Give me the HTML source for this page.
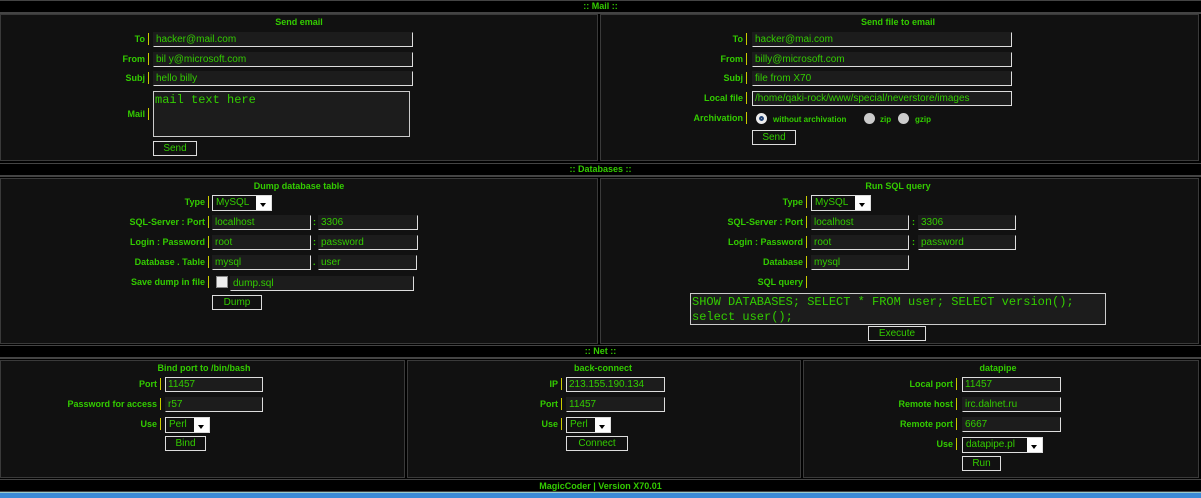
<!DOCTYPE html>
<html><head><meta charset="utf-8"><style>
*{margin:0;padding:0;box-sizing:border-box}
body{width:1201px;height:498px;background:#000;position:relative;overflow:hidden;font-family:"Liberation Sans",sans-serif;color:#3c0}
.a{position:absolute}
.bar{position:absolute;left:0;width:1201px;height:14px;background:#000;border-top:1px solid #444;border-bottom:2px solid #444;font:bold 9px "Liberation Sans",sans-serif;color:#3c0;text-align:center;line-height:11px}
.p{position:absolute;background:#111;border:1px solid #3a3a3a}
.t{position:absolute;font:bold 9px "Liberation Sans",sans-serif;color:#3c0;text-align:center;white-space:nowrap}
.l{position:absolute;font:bold 9px "Liberation Sans",sans-serif;color:#3c0;text-align:right;white-space:nowrap;line-height:15px}
.y{position:absolute;width:1px;height:12px;background:#cc0}
.i{position:absolute;height:15px;background:#1c1c1c;border:1px solid #1c1c1c;border-bottom-color:#ddd;border-right-color:#ddd;font:10px "Liberation Sans",sans-serif;color:#3c0;line-height:13px;padding-left:2px;white-space:nowrap;overflow:hidden}
.b{position:absolute;height:15px;background:#111;border:1px solid #ddd;font:10px "Liberation Sans",sans-serif;color:#3c0;text-align:center;line-height:13px}
.s{position:absolute;height:16px;background:#111;border:1px solid #ddd;font:10px "Liberation Sans",sans-serif;color:#3c0;line-height:14px;padding-left:3px}
.s:after{content:"";position:absolute;right:0;top:0;width:15px;height:14px;background:#fff}
.s:before{content:"";position:absolute;right:5px;top:7px;border:3px solid transparent;border-top:4px solid #000;z-index:2}
.m{position:absolute;background:#1c1c1c;border:1px solid #ccc;font:12px "Liberation Mono",monospace;color:#3c0;padding:1px 1px;line-height:15px;white-space:nowrap;overflow:hidden}
</style></head><body>
<div class="bar" style="top:0px">:: Mail ::</div>
<div class="bar" style="top:163px">:: Databases ::</div>
<div class="bar" style="top:345px">:: Net ::</div>
<div class="bar" style="top:479px;height:14px;line-height:12px">MagicCoder | Version X70.01</div>
<div class="a" style="top:492px;left:0;width:1201px;height:6px;background:#3a8ad6;border-top:1px solid #9cc"></div>

<div class="p" style="left:0;top:14px;width:598px;height:147px"></div>
<div class="p" style="left:600px;top:14px;width:599px;height:147px"></div>
<div class="p" style="left:0;top:178px;width:598px;height:166px"></div>
<div class="p" style="left:600px;top:178px;width:599px;height:166px"></div>
<div class="p" style="left:0;top:360px;width:405px;height:118px"></div>
<div class="p" style="left:407px;top:360px;width:394px;height:118px"></div>
<div class="p" style="left:803px;top:360px;width:396px;height:118px"></div>

<!-- Send email -->
<div class="t" style="left:199px;width:200px;top:17px">Send email</div>
<div class="l" style="right:1056px;top:32px">To</div><div class="y" style="left:148px;top:33px"></div><div class="i" style="left:153px;top:32px;width:260px">hacker@mail.com</div>
<div class="l" style="right:1056px;top:52px">From</div><div class="y" style="left:148px;top:53px"></div><div class="i" style="left:153px;top:52px;width:260px">bil y@microsoft.com</div>
<div class="l" style="right:1056px;top:71px">Subj</div><div class="y" style="left:148px;top:72px"></div><div class="i" style="left:153px;top:71px;width:260px">hello billy</div>
<div class="l" style="right:1056px;top:107px">Mail</div><div class="y" style="left:148px;top:108px"></div><div class="m" style="left:153px;top:91px;width:257px;height:46px">mail text here</div>
<div class="b" style="left:153px;top:141px;width:44px">Send</div>

<!-- Send file -->
<div class="t" style="left:798px;width:200px;top:17px">Send file to email</div>
<div class="l" style="right:458px;top:32px">To</div><div class="y" style="left:746px;top:33px"></div><div class="i" style="left:752px;top:32px;width:260px">hacker@mai.com</div>
<div class="l" style="right:458px;top:52px">From</div><div class="y" style="left:746px;top:53px"></div><div class="i" style="left:752px;top:52px;width:260px">billy@microsoft.com</div>
<div class="l" style="right:458px;top:71px">Subj</div><div class="y" style="left:746px;top:72px"></div><div class="i" style="left:752px;top:71px;width:260px">file from X70</div>
<div class="l" style="right:458px;top:91px">Local file</div><div class="y" style="left:746px;top:92px"></div><div class="i" style="left:752px;top:91px;width:260px;border-color:#ddd">/home/qaki-rock/www/special/neverstore/images</div>
<div class="l" style="right:458px;top:111px">Archivation</div><div class="y" style="left:746px;top:112px"></div>
<div class="a" style="left:756px;top:113px;width:11px;height:11px;border-radius:50%;background:#bbb;border:3px solid #eee;box-shadow:inset 0 0 0 2px #247"></div>
<div class="a" style="left:773px;top:115px;font:bold 8px 'Liberation Sans',sans-serif">without archivation</div>
<div class="a" style="left:864px;top:113px;width:11px;height:11px;border-radius:50%;background:#ccc"></div>
<div class="a" style="left:880px;top:115px;font:bold 8px 'Liberation Sans',sans-serif">zip</div>
<div class="a" style="left:898px;top:113px;width:11px;height:11px;border-radius:50%;background:#ccc"></div>
<div class="a" style="left:915px;top:115px;font:bold 8px 'Liberation Sans',sans-serif">gzip</div>
<div class="b" style="left:752px;top:130px;width:44px">Send</div>

<!-- Dump -->
<div class="t" style="left:199px;width:200px;top:181px">Dump database table</div>
<div class="l" style="right:996px;top:195px">Type</div><div class="y" style="left:208px;top:196px"></div><div class="s" style="left:212px;top:195px;width:60px">MySQL</div>
<div class="l" style="right:996px;top:215px">SQL-Server : Port</div><div class="y" style="left:208px;top:216px"></div><div class="i" style="left:212px;top:215px;width:99px">localhost</div><div class="l" style="left:313px;top:215px">:</div><div class="i" style="left:318px;top:215px;width:100px">3306</div>
<div class="l" style="right:996px;top:235px">Login : Password</div><div class="y" style="left:208px;top:236px"></div><div class="i" style="left:212px;top:235px;width:99px">root</div><div class="l" style="left:313px;top:235px">:</div><div class="i" style="left:318px;top:235px;width:100px">password</div>
<div class="l" style="right:996px;top:255px">Database . Table</div><div class="y" style="left:208px;top:256px"></div><div class="i" style="left:212px;top:255px;width:99px">mysql</div><div class="l" style="left:313px;top:255px">.</div><div class="i" style="left:318px;top:255px;width:99px">user</div>
<div class="l" style="right:996px;top:275px">Save dump in file</div><div class="y" style="left:208px;top:276px"></div><div class="a" style="left:216px;top:276px;width:12px;height:12px;background:#eee;border:1px solid #888"></div><div class="i" style="left:230px;top:276px;width:184px">dump.sql</div>
<div class="b" style="left:212px;top:295px;width:50px">Dump</div>

<!-- Run SQL -->
<div class="t" style="left:798px;width:200px;top:181px">Run SQL query</div>
<div class="l" style="right:398px;top:195px">Type</div><div class="y" style="left:806px;top:196px"></div><div class="s" style="left:811px;top:195px;width:60px">MySQL</div>
<div class="l" style="right:398px;top:215px">SQL-Server : Port</div><div class="y" style="left:806px;top:216px"></div><div class="i" style="left:811px;top:215px;width:98px">localhost</div><div class="l" style="left:912px;top:215px">:</div><div class="i" style="left:918px;top:215px;width:98px">3306</div>
<div class="l" style="right:398px;top:235px">Login : Password</div><div class="y" style="left:806px;top:236px"></div><div class="i" style="left:811px;top:235px;width:98px">root</div><div class="l" style="left:912px;top:235px">:</div><div class="i" style="left:918px;top:235px;width:98px">password</div>
<div class="l" style="right:398px;top:255px">Database</div><div class="y" style="left:806px;top:256px"></div><div class="i" style="left:811px;top:255px;width:98px">mysql</div>
<div class="l" style="right:398px;top:275px">SQL query</div><div class="y" style="left:806px;top:276px"></div>
<div class="m" style="left:690px;top:293px;width:416px;height:32px">SHOW DATABASES; SELECT * FROM user; SELECT version();<br>select user();</div>
<div class="b" style="left:868px;top:326px;width:58px">Execute</div>

<!-- Bind -->
<div class="t" style="left:104px;width:200px;top:363px">Bind port to /bin/bash</div>
<div class="l" style="right:1044px;top:377px">Port</div><div class="y" style="left:160px;top:378px"></div><div class="i" style="left:165px;top:377px;width:98px;border-color:#ddd">11457</div>
<div class="l" style="right:1044px;top:397px">Password for access</div><div class="y" style="left:160px;top:398px"></div><div class="i" style="left:165px;top:397px;width:98px">r57</div>
<div class="l" style="right:1044px;top:417px">Use</div><div class="y" style="left:160px;top:418px"></div><div class="s" style="left:165px;top:417px;width:45px">Perl</div>
<div class="b" style="left:165px;top:436px;width:41px">Bind</div>

<!-- back-connect -->
<div class="t" style="left:503px;width:200px;top:363px">back-connect</div>
<div class="l" style="right:643px;top:377px">IP</div><div class="y" style="left:561px;top:378px"></div><div class="i" style="left:566px;top:377px;width:99px;border-color:#ddd">213.155.190.134</div>
<div class="l" style="right:643px;top:397px">Port</div><div class="y" style="left:561px;top:398px"></div><div class="i" style="left:566px;top:397px;width:99px">11457</div>
<div class="l" style="right:643px;top:417px">Use</div><div class="y" style="left:561px;top:418px"></div><div class="s" style="left:566px;top:417px;width:45px">Perl</div>
<div class="b" style="left:566px;top:436px;width:62px">Connect</div>

<!-- datapipe -->
<div class="t" style="left:898px;width:200px;top:363px">datapipe</div>
<div class="l" style="right:248px;top:377px">Local port</div><div class="y" style="left:956px;top:378px"></div><div class="i" style="left:962px;top:377px;width:99px;border-color:#ddd">11457</div>
<div class="l" style="right:248px;top:397px">Remote host</div><div class="y" style="left:956px;top:398px"></div><div class="i" style="left:962px;top:397px;width:99px">irc.dalnet.ru</div>
<div class="l" style="right:248px;top:417px">Remote port</div><div class="y" style="left:956px;top:418px"></div><div class="i" style="left:962px;top:417px;width:99px">6667</div>
<div class="l" style="right:248px;top:437px">Use</div><div class="y" style="left:956px;top:438px"></div><div class="s" style="left:962px;top:437px;width:81px">datapipe.pl</div>
<div class="b" style="left:962px;top:456px;width:39px">Run</div>
</body></html>
